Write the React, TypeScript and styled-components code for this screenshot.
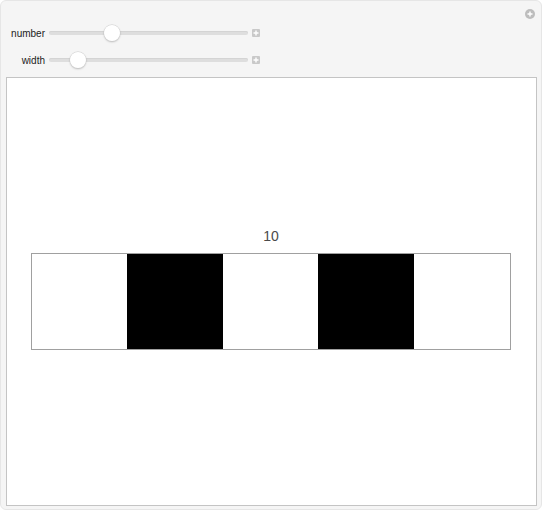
import React from "react";
import styled, { createGlobalStyle } from "styled-components";

const Global = createGlobalStyle`
  html, body { margin: 0; padding: 0; background: #ffffff; }
  body { font-family: "Liberation Sans", Arial, sans-serif; }
`;

const Panel = styled.div`
  position: relative;
  box-sizing: border-box;
  width: 542px;
  height: 510px;
  background: #f5f5f5;
  border: 1px solid #e6e6e6;
  border-radius: 6px;
  padding: 24px 0 0 5px;
  display: flex;
  flex-direction: column;
`;

const Controls = styled.div`
  display: flex;
  flex-direction: column;
  gap: 11px;
  height: 52px;
`;

const Row = styled.div`
  display: flex;
  align-items: center;
  height: 16px;
`;

const Label = styled.span`
  width: 39px;
  text-align: right;
  font-size: 10px;
  color: #222;
  margin-right: 4px;
`;

const Track = styled.div`
  position: relative;
  width: 199px;
  height: 4px;
  border-radius: 2px;
  background: #dedede;
  box-shadow: inset 0 1px 0 #d4d4d4;
`;

const Thumb = styled.div`
  position: absolute;
  top: 50%;
  width: 16px;
  height: 16px;
  margin-left: -8px;
  margin-top: -8px;
  border-radius: 50%;
  background: #ffffff;
  box-shadow: 0 0 0 0.5px #cfcfcf, 0 1px 2px rgba(0, 0, 0, 0.25);
`;

const PlusBox = styled.div`
  margin-left: 4px;
  width: 8px;
  height: 8px;
  background: #c9c9c9;
  border-radius: 1px;
  display: flex;
  align-items: center;
  justify-content: center;
`;

const Corner = styled.div`
  position: absolute;
  top: 8px;
  right: 6px;
  width: 10px;
  height: 10px;
  border-radius: 50%;
  background: #bdbdbd;
  display: flex;
  align-items: center;
  justify-content: center;
`;

const Content = styled.div`
  box-sizing: border-box;
  width: 531px;
  height: 429px;
  background: #ffffff;
  border: 1px solid #c4c4c4;
  display: flex;
  flex-direction: column;
  align-items: center;
  padding-top: 150px;
`;

const Caption = styled.div`
  font-family: "Liberation Sans", Arial, sans-serif;
  font-size: 14px;
  color: #4a4a4a;
  height: 17px;
  line-height: 17px;
  margin-bottom: 8px;
  margin-left: -1px;
`;

const Strip = styled.div`
  box-sizing: border-box;
  width: 480px;
  height: 97px;
  border: 1px solid #a0a0a0;
  display: grid;
  grid-template-columns: repeat(5, 1fr);
  margin-left: -2px;
`;

const Cell = styled.div<{ $dark: boolean }>`
  background: ${(p) => (p.$dark ? "#000000" : "#ffffff")};
`;

const SmallPlus = ({ size }: { size: number }) => (
  <svg width={size} height={size} viewBox="0 0 8 8">
    <path d="M4 1.5v5M1.5 4h5" stroke="#ffffff" strokeWidth="1.4" />
  </svg>
);

const Slider = ({ label, pos }: { label: string; pos: number }) => (
  <Row>
    <Label>{label}</Label>
    <Track>
      <Thumb style={{ left: `${pos}px` }} />
    </Track>
    <PlusBox>
      <SmallPlus size={8} />
    </PlusBox>
  </Row>
);

export default function App() {
  const cells = [false, true, false, true, false];
  return (
    <>
      <Global />
      <Panel>
        <Corner>
          <SmallPlus size={8} />
        </Corner>
        <Controls>
          <Slider label="number" pos={63} />
          <Slider label="width" pos={29} />
        </Controls>
        <Content>
          <Caption>10</Caption>
          <Strip>
            {cells.map((d, i) => (
              <Cell key={i} $dark={d} />
            ))}
          </Strip>
        </Content>
      </Panel>
    </>
  );
}
